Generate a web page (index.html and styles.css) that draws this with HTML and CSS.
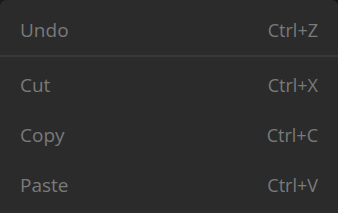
FILE: index.html
```html
<!DOCTYPE html>
<html>
<head>
<meta charset="utf-8">
<link rel="stylesheet" href="styles.css">
</head>
<body>
<div class="menu">
  <div class="item"><span class="label">Undo</span><span class="key">Ctrl+Z</span></div>
  <div class="sep"></div>
  <div class="item"><span class="label">Cut</span><span class="key">Ctrl+X</span></div>
  <div class="item"><span class="label">Copy</span><span class="key">Ctrl+C</span></div>
  <div class="item"><span class="label">Paste</span><span class="key">Ctrl+V</span></div>
</div>
</body>
</html>
```
FILE: styles.css
```css
html, body {
  margin: 0;
  padding: 0;
  background: #1a1816;
  width: 338px;
  height: 213px;
  overflow: hidden;
}
.menu {
  background: #2b2b2b;
  height: 213px;
  border-radius: 6px 6px 0 0;
  padding-top: 5px;
  box-sizing: border-box;
  font-family: "Open Sans", "Noto Sans", sans-serif;
  color: #7a7a7a;
}
.item {
  height: 50px;
  display: flex;
  align-items: center;
  justify-content: space-between;
  padding: 0 20px 0 20px;
}
.label {
  font-size: 19px;
  line-height: 26px;
}
.key {
  font-size: 18px;
  line-height: 26px;
}
.sep {
  height: 2px;
  background: #383838;
  margin-bottom: 3px;
}
```
